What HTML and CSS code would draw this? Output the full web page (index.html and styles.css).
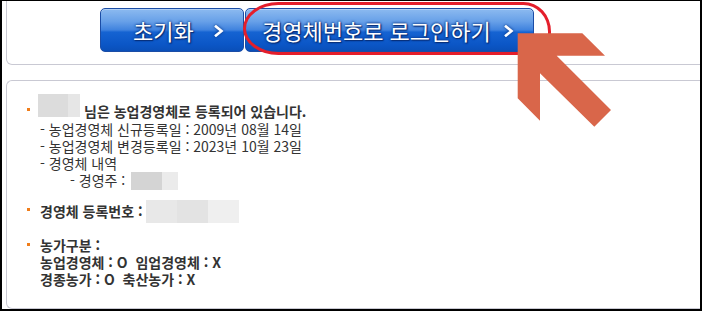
FILE: index.html
```html
<!DOCTYPE html>
<html lang="ko">
<head>
<meta charset="utf-8">
<title>경영체 정보</title>
<link rel="stylesheet" href="styles.css">
</head>
<body>
<div class="frame">
  <div class="panel-top">
    <button class="btn btn-reset" type="button"><span class="btn-label">초기화</span><svg class="chev" viewBox="0 0 10 12" width="10" height="12"><polyline points="2,1.5 7.5,6 2,10.5"/></svg></button>
    <div class="login-wrap">
      <button class="btn btn-login" type="button"><span class="btn-label">경영체번호로 로그인하기</span><svg class="chev" viewBox="0 0 10 12" width="10" height="12"><polyline points="2,1.5 7.5,6 2,10.5"/></svg></button>
      <span class="highlight"></span>
    </div>
  </div>
  <div class="panel-main">
    <div class="row row-first">
      <span class="mark"></span>
      <span class="mask mask-name"></span>
      <span class="strong">님은 농업경영체로 등록되어 있습니다.</span>
    </div>
    <div class="sub">
      <div class="line">- 농업경영체 신규등록일 : 2009년 08월 14일</div>
      <div class="line">- 농업경영체 변경등록일 : 2023년 10월 23일</div>
      <div class="line">- 경영체 내역</div>
      <div class="line line-deep">- 경영주 : <span class="mask mask-owner"></span></div>
    </div>
    <div class="row row-reg">
      <span class="mark"></span>
      <span class="strong">경영체 등록번호 :</span>
      <span class="mask mask-reg"></span>
    </div>
    <div class="row row-type">
      <span class="mark"></span>
      <div class="strong">
        <div class="bline">농가구분 :</div>
        <div class="bline">농업경영체 : O&nbsp;&nbsp;임업경영체 : X</div>
        <div class="bline">경종농가 : O&nbsp;&nbsp;축산농가 : X</div>
      </div>
    </div>
  </div>
  <svg class="arrow" viewBox="0 0 100 100" width="100" height="100"><polygon points="2.7,2.3 67.3,2.3 90,24.7 41.7,24.7 96,79 79.3,95.7 25,42.3 25,89.7 2.7,67.3"/></svg>
</div>
</body>
</html>
```
FILE: styles.css
```css
html, body {
  margin: 0;
  padding: 0;
  background: #fff;
}
body {
  font-family: "Noto Sans CJK KR", "Noto Sans", sans-serif;
  color: #333;
}
.frame {
  position: relative;
  width: 702px;
  height: 311px;
  box-sizing: border-box;
  border: 2px solid #000;
  border-top-width: 1px;
  overflow: hidden;
  display: flex;
  flex-direction: column;
}
.panel-top {
  height: 64px;
  box-sizing: border-box;
  margin-left: 4px;
  margin-right: -20px;
  border: 1px solid #c9c9d3;
  border-top: none;
  border-bottom-left-radius: 6px;
  padding: 7px 0 0 93px;
  display: flex;
  align-items: flex-start;
  gap: 1px;
  flex: none;
}
.btn {
  height: 44px;
  box-sizing: border-box;
  border: 1px solid #1b4da6;
  border-radius: 5px;
  background: linear-gradient(#8cbaf0 0%, #67a0e8 30%, #3f82de 50%, #1563d2 55%, #0b56c6 85%, #0a4fb8 100%);
  display: flex;
  align-items: center;
  color: #fff;
  font-family: "Noto Sans CJK KR", sans-serif;
  font-size: 22px;
  line-height: 1;
  padding: 0;
  cursor: pointer;
  box-shadow: inset 0 1px 0 rgba(255,255,255,0.35);
}
.btn-label {
  text-shadow: 0 0 3px #0a3482, 0 0 2px #0a3482, 1px 1px 1px #082a6e;
}
.chev {
  fill: none;
  stroke: #fff;
  stroke-width: 2.6;
  stroke-linecap: square;
  filter: drop-shadow(0 0 1.5px #0a3482);
  margin-top: 2px;
}
.btn-reset {
  width: 144px;
  padding-left: 32px;
}
.btn-reset .chev {
  margin-left: 20px;
}
.login-wrap {
  position: relative;
}
.btn-login {
  width: 289px;
  padding-left: 16px;
}
.btn-login .chev {
  margin-left: 13px;
}
.highlight {
  position: absolute;
  left: -2px;
  top: -6px;
  width: 308px;
  height: 53px;
  box-sizing: border-box;
  border: 3px solid #e41e2b;
  border-radius: 36px 28px 20px 36px / 27px 30px 20px 27px;
  pointer-events: none;
}
.panel-main {
  flex: 1;
  margin-top: 15px;
  margin-left: 4px;
  margin-right: -20px;
  border: 1px solid #c9c9d3;
  border-right: none;
  border-radius: 6px 0 0 6px;
  padding-left: 20px;
  font-size: 14px;
}
.row {
  display: flex;
}
.mark {
  flex: none;
  width: 3px;
  height: 3px;
  background: #f07d1a;
  margin-right: 10px;
}
.strong {
  font-weight: bold;
  font-size: 14px;
  color: #333;
}
.mask {
  display: inline-block;
  flex: none;
}
.row-first {
  margin-top: 13px;
  align-items: flex-end;
  height: 23px;
}
.row-first .mark {
  align-self: flex-start;
  margin-top: 14px;
}
.row-first .strong {
  line-height: 12px;
}
.mask-name {
  width: 42px;
  height: 23px;
  margin-left: -2px;
  margin-right: 4px;
  background: linear-gradient(90deg, #dcdcdc 0, #dcdcdc 30px, #e6e6e6 30px, #e6e6e6 42px);
}
.sub {
  margin-top: 4px;
  padding-left: 13px;
  line-height: 17px;
}
.line-deep {
  padding-left: 30px;
  display: flex;
  align-items: center;
  height: 17px;
}
.mask-owner {
  width: 47px;
  height: 18px;
  margin-left: 6px;
  background: linear-gradient(90deg, #d4d4d4 0, #d4d4d4 31px, #ebebeb 31px, #ebebeb 47px);
}
.row-reg {
  margin-top: 11px;
  height: 23px;
  align-items: center;
  line-height: 17px;
}
.row-reg .mark {
  align-self: flex-start;
  margin-top: 8px;
}
.mask-reg {
  width: 93px;
  height: 23px;
  margin-left: 3px;
  background: linear-gradient(90deg, #e8e8e8 0, #e8e8e8 31px, #e3e3e3 31px, #e3e3e3 62px, #efefef 62px, #efefef 93px);
}
.row-type {
  margin-top: 14px;
}
.row-type .mark {
  margin-top: 6px;
}
.bline {
  line-height: 17px;
}
.arrow {
  position: absolute;
  left: 513px;
  top: 30px;
  fill: #d9664a;
}
```
